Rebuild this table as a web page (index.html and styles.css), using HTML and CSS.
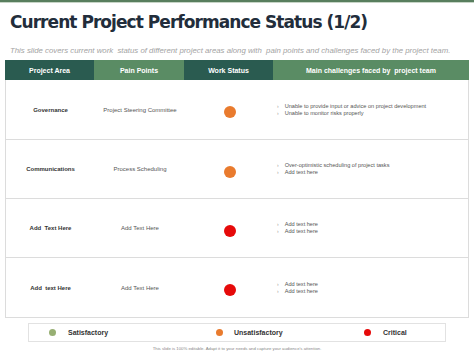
FILE: index.html
```html
<!DOCTYPE html>
<html>
<head>
<meta charset="utf-8">
<link rel="stylesheet" href="styles.css">
</head>
<body>
<div class="page">
  <div class="topbar"></div>
  <h1 class="title">Current Project Performance Status (1/2)</h1>
  <p class="subtitle">This slide covers current work &nbsp;status of different project areas along with &nbsp;pain points and challenges faced by the project team.</p>

  <div class="table">
    <div class="thead">
      <div class="th dark">Project Area</div>
      <div class="th light">Pain Points</div>
      <div class="th dark">Work Status</div>
      <div class="th light">Main challenges faced by &nbsp;project team</div>
    </div>
    <div class="row r1">
      <div class="area">Governance</div>
      <div class="pain">Project Steering Committee</div>
      <div class="status"><span class="dot orange"></span></div>
      <ul class="chal"><li>Unable to provide input or advice on project development</li><li>Unable to monitor risks properly</li></ul>
    </div>
    <div class="row r2">
      <div class="area">Communications</div>
      <div class="pain">Process Scheduling</div>
      <div class="status"><span class="dot orange"></span></div>
      <ul class="chal"><li>Over-optimistic scheduling of project tasks</li><li>Add text here</li></ul>
    </div>
    <div class="row r3">
      <div class="area">Add &nbsp;Text Here</div>
      <div class="pain">Add Text Here</div>
      <div class="status"><span class="dot red"></span></div>
      <ul class="chal"><li>Add text here</li><li>Add text here</li></ul>
    </div>
    <div class="row r4">
      <div class="area">Add &nbsp;text Here</div>
      <div class="pain">Add Text Here</div>
      <div class="status"><span class="dot red"></span></div>
      <ul class="chal"><li>Add text here</li><li>Add text here</li></ul>
    </div>
  </div>

  <div class="legend">
    <div class="item i1"><span class="ldot green"></span><span class="ltext">Satisfactory</span></div>
    <div class="item i2"><span class="ldot orange"></span><span class="ltext">Unsatisfactory</span></div>
    <div class="item i3"><span class="ldot red"></span><span class="ltext">Critical</span></div>
  </div>

  <div class="footer">
    <p class="note">This slide is 100% editable. Adapt it to your needs and capture your audience's attention.</p>
    <span class="corner"></span>
  </div>
</div>
</body>
</html>
```

FILE: styles.css
```css
* { box-sizing: border-box; }
html, body { margin: 0; padding: 0; background: #fff; }
.page {
  width: 474px;
  height: 355px;
  overflow: hidden;
  position: relative;
  font-family: "Liberation Sans", Arial, sans-serif;
}
.topbar {
  height: 3px;
  background: #587e5e;
  border-bottom: 1px solid #c7d5c7;
}
.title {
  margin: 8px 0 0 10px;
  font-family: "DejaVu Sans", sans-serif;
  font-weight: bold;
  font-size: 17px;
  line-height: 22px;
  color: #222d3b;
  letter-spacing: -0.95px;
}
.subtitle {
  margin: 13px 0 0 10px;
  font-style: italic;
  font-size: 7.8px;
  line-height: 9px;
  color: #a3a3a3;
  white-space: nowrap;
}
.table {
  margin: 5px 0 0 5px;
  width: 464px;
}
.thead, .row {
  display: grid;
  grid-template-columns: 89px 90px 89px 196px;
}
.thead { height: 20px; }
.th {
  display: flex;
  align-items: center;
  justify-content: center;
  color: #fff;
  font-weight: bold;
  font-size: 7px;
}
.th.dark { background: #2a5b50; }
.th.light { background: #5a8c64; }
.row {
  border-left: 1px solid #dcdcdc;
  border-right: 1px solid #dcdcdc;
  border-bottom: 1px solid #dcdcdc;
  align-items: center;
}
.r1 { height: 60px; }
.r2 { height: 59px; }
.r3 { height: 59px; }
.r4 { height: 60px; }
.area {
  text-align: center;
  font-weight: bold;
  font-size: 6px;
  color: #333;
}
.pain {
  text-align: center;
  font-size: 6px;
  color: #555;
}
.status {
  display: flex;
  justify-content: center;
  padding-top: 5px;
}
.dot {
  width: 12px;
  height: 12px;
  border-radius: 50%;
  display: block;
}
.orange { background: #e97b2e; }
.red { background: #e60a0a; }
.green { background: #97af73; }
.chal {
  list-style: none;
  margin: 0;
  padding: 0 0 0 3px;
  font-size: 5.6px;
  line-height: 7px;
  color: #555;
}
.chal li {
  display: flex;
  gap: 6px;
}
.chal li::before {
  content: "›";
  color: #999;
  font-size: 5px;
}
.legend {
  margin: 5px 0 0 28px;
  width: 418px;
  height: 19px;
  border: 1px solid #e2e2e2;
  display: grid;
  grid-template-columns: 166px 166px 1fr;
  align-items: center;
}
.item {
  display: flex;
  align-items: center;
}
.i1 { padding-left: 20px; }
.i2 { padding-left: 21px; }
.i3 { padding-left: 3px; }
.ldot {
  width: 7px;
  height: 7px;
  border-radius: 50%;
  display: block;
  margin-right: 12px;
}
.i2 .ldot { margin-right: 11px; }
.ltext {
  font-weight: bold;
  font-size: 7px;
  color: #333;
}
.footer {
  position: relative;
  height: 15px;
}
.note {
  margin: 4px 0 0 0;
  text-align: center;
  font-size: 4.3px;
  color: #888;
  width: 474px;
}
.corner {
  position: absolute;
  right: 5px;
  bottom: 0;
  width: 14px;
  height: 3px;
  background: #5a7f63;
}
```
